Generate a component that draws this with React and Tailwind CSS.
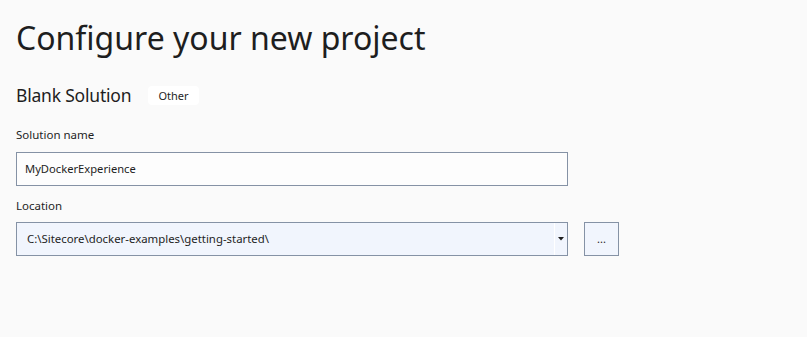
import React from "react";

export default function App() {
  return (
    <div
      className="w-[807px] h-[337px] bg-[#fafafa] text-[#1e1e1e] overflow-hidden"
      style={{ fontFamily: '"Noto Sans", "Open Sans", sans-serif' }}
    >
      <div className="pl-[16px] pt-[14px]">
        <h1 className="text-[32px] leading-[48px] font-normal">Configure your new project</h1>

        <div className="flex items-center mt-[23px] h-[20px]">
          <span className="text-[17.5px] leading-[20px] tracking-[-0.2px]">Blank Solution</span>
          <span className="ml-[17px] h-[19px] px-[10px] rounded-[4px] bg-white text-[11px] leading-[19px]">Other</span>
        </div>

        <div className="mt-[22px] text-[11.5px] leading-[16px]">Solution name</div>
        <div className="mt-[9px] w-[552px] h-[34px] border border-[#8592a5] bg-[#fdfdfd] flex items-center pl-[8px] text-[11.2px]">
          MyDockerExperience
        </div>

        <div className="mt-[12px] text-[11.5px] leading-[16px]">Location</div>
        <div className="mt-[8px] flex items-center">
          <div className="w-[552px] h-[34px] border border-[#8592a5] bg-[#f1f5fd] flex items-center text-[11.4px]">
            <span className="flex-1 pl-[10px]">C:\Sitecore\docker-examples\getting-started\</span>
            <div className="w-[13px] h-full border-l border-white flex items-center justify-center">
              <svg width="6" height="4" viewBox="0 0 6 4"><path d="M0 0h6L3 3.5z" fill="#1e1e1e" /></svg>
            </div>
          </div>
          <div className="ml-[16px] w-[35px] h-[34px] border border-[#8592a5] bg-[#f1f5fd] flex items-center justify-center text-[11px] leading-none pb-[2px]">
            ...
          </div>
        </div>
      </div>
    </div>
  );
}
